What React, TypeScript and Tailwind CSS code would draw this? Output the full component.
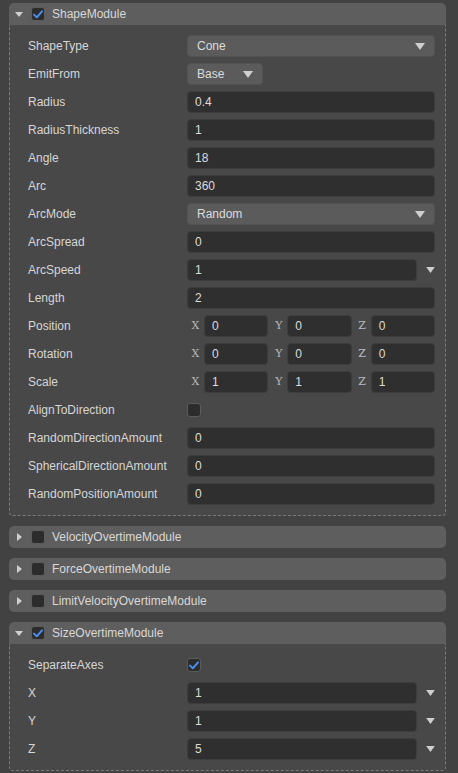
import React from "react";

const Arrow = ({ small = false }: { small?: boolean }) => (
  <svg width={small ? 9 : 10} height={small ? 6 : 7} viewBox="0 0 10 7" className="shrink-0">
    <path d="M0 0 L10 0 L5 7 Z" fill="#cfcfcf" />
  </svg>
);

const Check = ({ checked }: { checked: boolean }) => (
  <div className="w-[14px] h-[14px] rounded-[3px] bg-[#2c2c2c] border border-[#5c5c5c] flex items-center justify-center shrink-0">
    {checked && (
      <svg width="10" height="9" viewBox="0 0 10 9">
        <path d="M1 4.6 L3.8 7.3 L9 1.3" fill="none" stroke="#4a8ff5" strokeWidth="1.9" strokeLinecap="round" strokeLinejoin="round" />
      </svg>
    )}
  </div>
);

const Label = ({ children }: { children: React.ReactNode }) => (
  <div className="w-[159px] shrink-0 text-[#d6d6d6]">{children}</div>
);

const Input = ({ value, className = "flex-1" }: { value: string; className?: string }) => (
  <div className={`${className} h-[22px] rounded-[4px] bg-[#2f2f2f] border border-[#3d3d3d] flex items-center pl-[7px] text-[#dcdcdc]`}>
    {value}
  </div>
);

const Row = ({ children }: { children: React.ReactNode }) => (
  <div className="flex items-center h-[22px]">{children}</div>
);

const TextRow = ({ label, value }: { label: string; value: string }) => (
  <Row>
    <Label>{label}</Label>
    <Input value={value} />
  </Row>
);

const SelectRow = ({ label, value, narrow = false }: { label: string; value: string; narrow?: boolean }) => (
  <Row>
    <Label>{label}</Label>
    <div
      className={`${narrow ? "w-[76px]" : "flex-1"} h-[22px] rounded-[4px] bg-[#5b5b5b] border border-[#525252] flex items-center justify-between pl-[9px] pr-[9px] text-[#dcdcdc]`}
    >
      <span>{value}</span>
      <Arrow />
    </div>
  </Row>
);

const CurveRow = ({ label, value }: { label: string; value: string }) => (
  <Row>
    <Label>{label}</Label>
    <Input value={value} />
    <div className="w-[18px] flex justify-end shrink-0">
      <Arrow small />
    </div>
  </Row>
);

const VecRow = ({ label, v }: { label: string; v: [string, string, string] }) => (
  <Row>
    <Label>{label}</Label>
    <div className="flex-1 grid grid-cols-3 gap-[2px]">
      {(["X", "Y", "Z"] as const).map((a, i) => (
        <div key={a} className="flex items-center">
          <div className="w-[17px] shrink-0 text-center font-['DejaVu_Serif',serif] text-[11px] text-[#bababa]">{a}</div>
          <Input value={v[i]} />
        </div>
      ))}
    </div>
  </Row>
);

const CheckRow = ({ label, checked }: { label: string; checked: boolean }) => (
  <Row>
    <Label>{label}</Label>
    <Check checked={checked} />
  </Row>
);

const Header = ({ title, open, checked }: { title: string; open: boolean; checked: boolean }) => (
  <div className={`h-[22px] bg-[#5e5e5e] flex items-center pl-[6px] ${open ? "rounded-t-[5px]" : "rounded-[5px]"}`}>
    <div className="w-[8px] flex justify-center">
      {open ? (
        <svg width="8" height="5" viewBox="0 0 8 5">
          <path d="M0 0 L8 0 L4 5 Z" fill="#d0d0d0" />
        </svg>
      ) : (
        <svg width="5" height="8" viewBox="0 0 5 8">
          <path d="M0 0 L5 4 L0 8 Z" fill="#d0d0d0" />
        </svg>
      )}
    </div>
    <div className="ml-[8px]">
      <Check checked={checked} />
    </div>
    <div className="ml-[7px] text-[#d8d8d8]">{title}</div>
  </div>
);

const Body = ({ children }: { children: React.ReactNode }) => (
  <div className="bg-[#484848] border border-t-0 border-dashed border-[#7a7a7a] rounded-b-[4px] pl-[18px] pr-[10px] pt-[10px] pb-[10px] flex flex-col gap-[6px]">
    {children}
  </div>
);

export default function App() {
  return (
    <div className="w-[458px] h-[773px] bg-[#424242] pt-[3px] pl-[9px] pr-[12px] font-[family-name:Liberation_Sans,Arial,sans-serif] text-[12px] overflow-hidden">
      <div className="flex flex-col">
        <Header title="ShapeModule" open checked />
        <Body>
          <SelectRow label="ShapeType" value="Cone" />
          <SelectRow label="EmitFrom" value="Base" narrow />
          <TextRow label="Radius" value="0.4" />
          <TextRow label="RadiusThickness" value="1" />
          <TextRow label="Angle" value="18" />
          <TextRow label="Arc" value="360" />
          <SelectRow label="ArcMode" value="Random" />
          <TextRow label="ArcSpread" value="0" />
          <CurveRow label="ArcSpeed" value="1" />
          <TextRow label="Length" value="2" />
          <VecRow label="Position" v={["0", "0", "0"]} />
          <VecRow label="Rotation" v={["0", "0", "0"]} />
          <VecRow label="Scale" v={["1", "1", "1"]} />
          <CheckRow label="AlignToDirection" checked={false} />
          <TextRow label="RandomDirectionAmount" value="0" />
          <TextRow label="SphericalDirectionAmount" value="0" />
          <TextRow label="RandomPositionAmount" value="0" />
        </Body>
        <div className="mt-[10px] flex flex-col gap-[10px]">
          <Header title="VelocityOvertimeModule" open={false} checked={false} />
          <Header title="ForceOvertimeModule" open={false} checked={false} />
          <Header title="LimitVelocityOvertimeModule" open={false} checked={false} />
          <div>
            <Header title="SizeOvertimeModule" open checked />
            <Body>
              <CheckRow label="SeparateAxes" checked />
              <CurveRow label="X" value="1" />
              <CurveRow label="Y" value="1" />
              <CurveRow label="Z" value="5" />
            </Body>
          </div>
        </div>
      </div>
    </div>
  );
}
